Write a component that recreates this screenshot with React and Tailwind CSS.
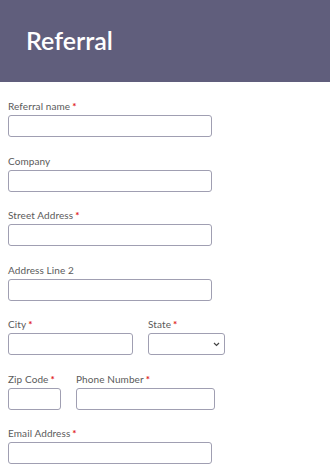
import React from "react";

function Label({ children, req }) {
  return (
    <div className="h-[14px] leading-[14px] text-[10px] text-[#5a5a5a] mb-[2px] whitespace-nowrap tracking-[0.1px]">
      {children}
      {req && <span className="text-[#e02020] ml-[2px] font-bold">*</span>}
    </div>
  );
}

function Input({ w }) {
  return <div className={`h-[22px] ${w} rounded-[3px] border border-[#a09fb2] bg-white`} />;
}

export default function App() {
  return (
    <div className="w-[330px] h-[464px] overflow-hidden bg-white" style={{ fontFamily: 'Lato, sans-serif' }}>
      <div className="h-[82px] bg-[#605e7c] flex items-center pl-[26px]">
        <h1 className="text-[25px] text-white font-semibold leading-none pb-[1px]">Referral</h1>
      </div>
      <div className="pl-[8px] pt-[17px] flex flex-col gap-[16.5px]">
        <div>
          <Label req>Referral name</Label>
          <Input w="w-[204px]" />
        </div>
        <div>
          <Label>Company</Label>
          <Input w="w-[204px]" />
        </div>
        <div>
          <Label req>Street Address</Label>
          <Input w="w-[204px]" />
        </div>
        <div>
          <Label>Address Line 2</Label>
          <Input w="w-[204px]" />
        </div>
        <div className="flex gap-[15px]">
          <div>
            <Label req>City</Label>
            <Input w="w-[125px]" />
          </div>
          <div>
            <Label req>State</Label>
            <div className="h-[22px] w-[77px] rounded-[3px] border border-[#a09fb2] bg-white flex items-center justify-end pr-[4px]">
              <svg width="7" height="5" viewBox="0 0 7 5"><path d="M1 1l2.5 2.5L6 1" stroke="#444" strokeWidth="1.2" fill="none" /></svg>
            </div>
          </div>
        </div>
        <div className="flex gap-[15px]">
          <div>
            <Label req>Zip Code</Label>
            <Input w="w-[53px]" />
          </div>
          <div>
            <Label req>Phone Number</Label>
            <Input w="w-[139px]" />
          </div>
        </div>
        <div>
          <Label req>Email Address</Label>
          <Input w="w-[204px]" />
        </div>
      </div>
    </div>
  );
}
